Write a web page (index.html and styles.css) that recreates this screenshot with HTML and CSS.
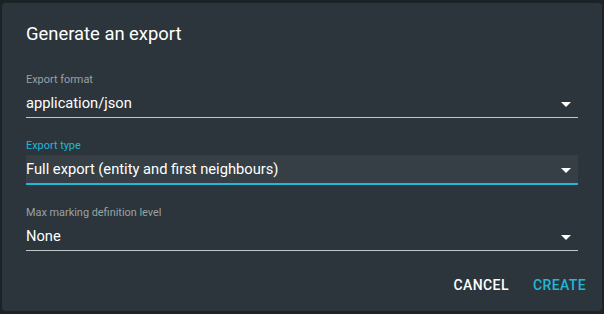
FILE: index.html
```html
<!DOCTYPE html>
<html lang="en">
<head>
<meta charset="utf-8">
<title>Generate an export</title>
<link rel="stylesheet" href="styles.css">
</head>
<body>
<div class="dialog">
  <h2 class="title">Generate an export</h2>
  <div class="fields">
    <div class="field">
      <div class="label">Export format</div>
      <div class="select">
        <span class="value">application/json</span>
        <svg class="arrow" viewBox="0 0 24 24" width="24" height="24"><path d="M7 10l5 5 5-5z"/></svg>
      </div>
    </div>
    <div class="field focused">
      <div class="label">Export type</div>
      <div class="select">
        <span class="value">Full export (entity and first neighbours)</span>
        <svg class="arrow" viewBox="0 0 24 24" width="24" height="24"><path d="M7 10l5 5 5-5z"/></svg>
      </div>
    </div>
    <div class="field">
      <div class="label">Max marking definition level</div>
      <div class="select">
        <span class="value">None</span>
        <svg class="arrow" viewBox="0 0 24 24" width="24" height="24"><path d="M7 10l5 5 5-5z"/></svg>
      </div>
    </div>
  </div>
  <div class="actions">
    <button class="btn">Cancel</button>
    <button class="btn primary">Create</button>
  </div>
</div>
</body>
</html>
```

FILE: styles.css
```css
html, body {
  margin: 0;
  padding: 0;
}
body {
  background: #1c2327;
  font-family: Roboto, "Liberation Sans", sans-serif;
  color: #ffffff;
  width: 604px;
  height: 314px;
  overflow: hidden;
}
.dialog {
  box-sizing: border-box;
  margin: 3px 2px 0 2px;
  width: 600px;
  height: 308px;
  background: #2b353b;
  border-radius: 4px;
  padding-top: 19px;
  display: flex;
  flex-direction: column;
}
.title {
  margin: 0 24px 27px 24px;
  font-size: 18.4px;
  font-weight: 400;
  line-height: 24px;
  color: #ffffff;
}
.fields {
  display: flex;
  flex-direction: column;
  gap: 21px;
  padding: 0 24px;
}
.field {
  display: flex;
  flex-direction: column;
}
.label {
  font-size: 10.9px;
  line-height: 14px;
  color: #9ba1a5;
  margin-bottom: 2px;
}
.select {
  position: relative;
  font-size: 14.7px;
  line-height: 19px;
  padding: 5px 0 4px 0;
  border-bottom: 1px solid #c4c7c9;
  color: #ffffff;
}
.focused .label {
  color: #22b7d7;
}
.focused .select {
  background: #353f45;
  border-bottom: 2px solid #22b7d7;
}
.arrow {
  position: absolute;
  right: 0;
  top: 3px;
  fill: #ffffff;
}
.actions {
  margin-top: 8px;
  padding: 8px;
  display: flex;
  justify-content: flex-end;
  gap: 8px;
}
.btn {
  font-family: Roboto, "Liberation Sans", sans-serif;
  font-size: 14px;
  font-weight: 500;
  line-height: 24px;
  letter-spacing: 0.4px;
  text-transform: uppercase;
  padding: 6px 8px;
  min-width: 64px;
  background: transparent;
  border: none;
  color: #ffffff;
  cursor: pointer;
}
.btn.primary {
  color: #22b7d7;
}
```
